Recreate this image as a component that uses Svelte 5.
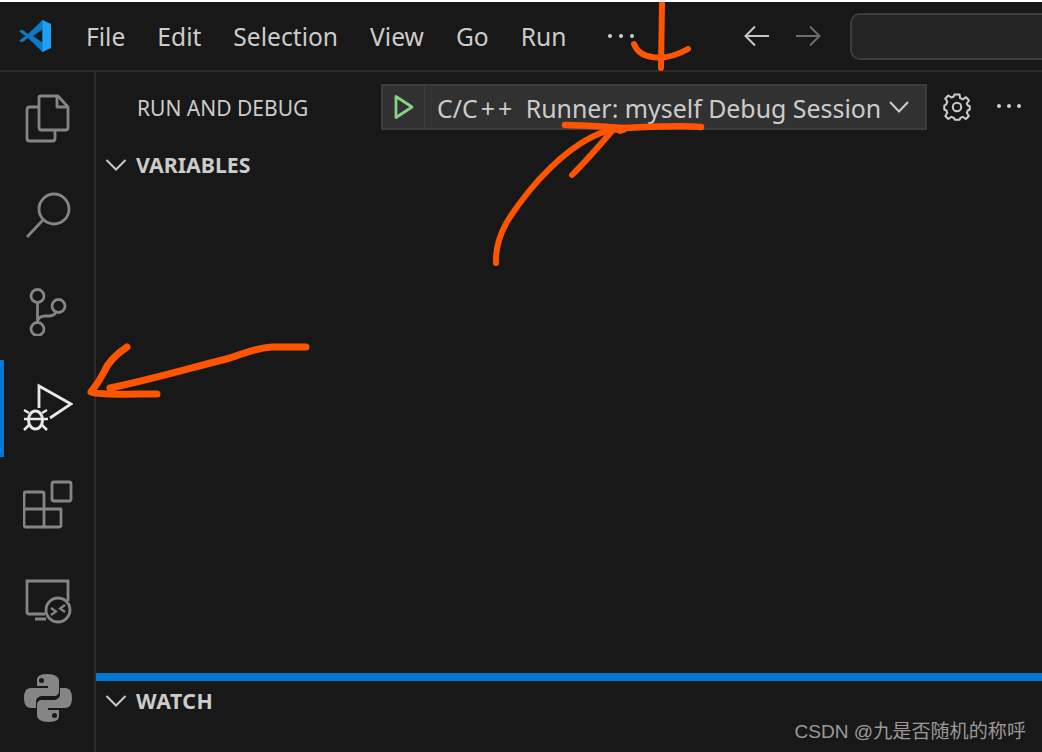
<script>
  const menus = ['File', 'Edit', 'Selection', 'View', 'Go', 'Run'];
</script>

<div class="window">
  <header class="titlebar">
    <svg class="logo" width="36" height="36" viewBox="0 0 36 36">
      <path d="M25.500 2 L11 16 L5 11.500 L2 13.200 L8.500 18 L2 22.800 L5 24.500 L11 20 L25.500 34 L27 33.200 V3 Z M25.500 11.500 L16 18 L25.500 24.500 Z" fill="#0a7cc6" fill-rule="evenodd"/>
      <path d="M25.500 2 L34 6 V30 L25.500 34 Z" fill="#1fa0f2"/>
    </svg>
    <nav class="menu">
      {#each menus as m}<span class="menu-item">{m}</span>{/each}
      <span class="menu-more"><i></i><i></i><i></i></span>
    </nav>
    <div class="nav-arrows">
      <svg width="28" height="28" viewBox="0 0 28 28" fill="none" stroke="#c8c8c8" stroke-width="2"><path d="M26 14H3M12 4.500 2.500 14 12 23.500"/></svg>
      <svg width="28" height="28" viewBox="0 0 28 28" fill="none" stroke="#6e6e6e" stroke-width="2"><path d="M2 14H25M16 4.500 25.500 14 16 23.500"/></svg>
    </div>
    <div class="command"></div>
  </header>

  <div class="body">
    <aside class="activity">
      <div class="act">
        <svg width="46" height="50" viewBox="0 0 46 50" fill="none" stroke="#858585" stroke-width="2.800" stroke-linejoin="round">
          <path d="M14 13H4.500Q2 13 2 15.500V44.500Q2 47 4.500 47H27.500Q30 47 30 44.500V36"/>
          <path d="M14 3.500Q14 2 16 2H33L43 13V33.500Q43 36 40.500 36H16.500Q14 36 14 33.500Z"/>
          <path d="M32 2V13H43"/>
        </svg>
      </div>
      <div class="act">
        <svg width="48" height="48" viewBox="0 0 48 48" fill="none" stroke="#858585" stroke-width="2.800">
          <circle cx="30" cy="18" r="15"/>
          <path d="M19 29 3 46"/>
        </svg>
      </div>
      <div class="act">
        <svg width="38" height="48" viewBox="0 0 38 48" fill="none" stroke="#858585" stroke-width="2.800">
          <circle cx="8.500" cy="8" r="6.500"/>
          <circle cx="29.500" cy="18" r="6.500"/>
          <circle cx="8.500" cy="41" r="6.500"/>
          <path d="M8.500 14.500V34.500M8.500 33Q10 28 16 28H20Q25 28 27 24"/>
        </svg>
      </div>
      <div class="act active">
        <svg width="50" height="50" viewBox="0 0 50 50" fill="none" stroke="#e8e8e8" stroke-width="2.800">
          <path d="M16 25V3L48 21 27 35"/>
          <ellipse cx="12.500" cy="37" rx="7" ry="9" stroke-width="3"/>
          <path d="M6 36H19M1 27 6 30M24 27 19 30M1 36H6M19 36H25M1 47 6 42M24 47 19 42" stroke-width="2.600"/>
        </svg>
      </div>
      <div class="act">
        <svg width="50" height="50" viewBox="0 0 50 50" fill="none" stroke="#858585" stroke-width="2.800" stroke-linejoin="round">
          <rect x="29" y="2" width="19" height="19" rx="2"/>
          <path d="M3 12H19Q21 12 21 14V47H3Q1 47 1 45V14Q1 12 3 12Z"/>
          <path d="M1 29H21M21 29H38V45Q38 47 36 47H21"/>
        </svg>
      </div>
      <div class="act">
        <svg width="48" height="46" viewBox="0 0 48 46" fill="none" stroke="#858585" stroke-width="2.800">
          <path d="M44 23V3H3V34Q3 36 5 36H21M11 41H22"/>
          <circle cx="34" cy="32" r="12" fill="#181818"/>
          <path d="M27 30 32 33.500 27 37M41 27 36 30.500 41 34" stroke-width="2.200"/>
        </svg>
      </div>
      <div class="act">
        <svg width="48" height="48" viewBox="0 0 48 48">
          <path d="M23.500 0C13 0 13 4 13 7V12H24V14H7C2 14 0 18 0 24C0 30 2 34 7 34H12V28C12 24 15 22 19 22H30C33 22 35 20 35 17V7C35 3 31 0 23.500 0ZM17.500 4A2.500 2.500 0 1 1 17.500 9A2.500 2.500 0 0 1 17.500 4Z" fill="#858585" fill-rule="evenodd"/>
          <path d="M24.500 48C35 48 35 44 35 41V36H24V34H41C46 34 48 30 48 24C48 18 46 14 41 14H36V20C36 24 33 26 29 26H18C15 26 13 28 13 31V41C13 45 17 48 24.500 48ZM30.500 44A2.500 2.500 0 1 1 30.500 39A2.500 2.500 0 0 1 30.500 44Z" fill="#858585" fill-rule="evenodd"/>
        </svg>
      </div>
    </aside>

    <main class="side">
      <div class="side-head">
        <span class="side-title">RUN AND DEBUG</span>
        <div class="debug-box">
          <span class="run-btn">
            <svg width="22" height="26" viewBox="0 0 22 26" fill="none" stroke="#89d185" stroke-width="2.800" stroke-linejoin="round"><path d="M3 2.500V23.500L19 13Z"/></svg>
          </span>
          <span class="config">C/C<span class="lang">++</span> Runner: myself Debug Session</span>
          <svg class="caret" width="22" height="14" viewBox="0 0 22 14" fill="none" stroke="#cccccc" stroke-width="2"><path d="M2 2 11 11.500 20 2"/></svg>
        </div>
        <svg class="gear" width="28" height="28" viewBox="0 0 28 28" fill="none" stroke="#cccccc" stroke-width="2" stroke-linejoin="round">
          <path d="M11.500 1.500H16.500L17.200 5.200L19.800 6.300L23 4.200L26 7.500L23.800 10.500L24.800 12.500L26.700 13V16.500L24.800 17.500L23.800 19.800L25.800 23L22.800 26L19.700 23.800L17.400 24.800L16.500 26.800H11.800L10.800 24.800L8.500 23.800L5.300 26L2.300 23L4.300 19.800L3.300 17.500L1.300 16.500V12.500L3.300 11.300L4.300 8.700L2.300 5.500L5.300 2.500L8.500 4.500L10.800 3.500Z"/>
          <circle cx="14" cy="14" r="4.200"/>
        </svg>
        <span class="dots"><i></i><i></i><i></i></span>
      </div>

      <div class="section">
        <svg width="22" height="14" viewBox="0 0 22 14" fill="none" stroke="#c8c8c8" stroke-width="2"><path d="M1.500 2 11 11.500 20.500 2"/></svg>
        <span class="label">VARIABLES</span>
      </div>
      <div class="spacer"></div>
      <div class="sash"></div>
      <div class="section watch">
        <svg width="22" height="14" viewBox="0 0 22 14" fill="none" stroke="#c8c8c8" stroke-width="2"><path d="M1.500 2 11 11.500 20.500 2"/></svg>
        <span class="label">WATCH</span>
      </div>
    </main>
  </div>

  <svg class="ink" width="1042" height="752" viewBox="0 0 1042 752" fill="none" stroke="#ff5500" stroke-linecap="round" stroke-linejoin="round">
    <path stroke-width="6" d="M662 3 661 68M634 44C640 60 665 62 688 49"/>
    <path stroke-width="6.500" d="M565 125C585 125 605 127 624 128C650 127 680 125 701 127"/>
    <path stroke-width="6" d="M496 263C495 235 510 215 530 190C555 160 585 135 612 130C622 129 630 128 620 131M612 131C600 145 585 162 572 175"/>
    <path stroke-width="7" d="M306 347H272C255 348 245 353 230 358C190 368 150 380 110 388M127 347C115 355 108 362 104 372C100 380 95 387 91 392C95 395 130 394 157 394"/>
  </svg>
  <div class="mark">CSDN @九是否随机的称呼</div>
</div>

<style>
  :global(body) { margin: 0; background: #181818; }
  .window {
    position: relative;
    width: 1042px;
    height: 752px;
    overflow: hidden;
    background: #181818;
    color: #cccccc;
    font-family: "Noto Sans", "Open Sans", sans-serif;
    display: flex;
    flex-direction: column;
    border-top: 2px solid #ffffff;
    box-sizing: border-box;
  }
  .titlebar {
    height: 68px;
    flex: none;
    display: flex;
    align-items: center;
    padding-left: 17px;
    border-bottom: 2px solid #2b2b2b;
    box-sizing: content-box;
  }
  .logo { margin-right: 33px; flex: none; }
  .menu { display: flex; align-items: center; gap: 32px; font-size: 24.600px; color: #cccccc; }
  .menu-more { display: flex; gap: 7px; margin-left: 10px; margin-top: 0; }
  .menu-more i, .dots i { display: block; width: 4px; height: 4px; border-radius: 50%; background: #d0d0d0; }
  .nav-arrows { display: flex; gap: 23px; margin-left: 109px; }
  .command {
    margin-left: 28px;
    width: 300px;
    height: 47px;
    background: #242424;
    border: 2px solid #3c3c3c;
    border-radius: 10px;
    box-sizing: border-box;
    flex: none;
  }
  .body { flex: 1; display: flex; min-height: 0; }
  .activity {
    width: 96px;
    flex: none;
    box-sizing: border-box;
    border-right: 2px solid #2b2b2b;
    display: flex;
    flex-direction: column;
    margin-top: -1.500px;
  }
  .act {
    height: 96.500px;
    flex: none;
    display: flex;
    align-items: center;
    justify-content: center;
    box-sizing: border-box;
    padding-left: 2px;
  }
  .act.active { box-shadow: inset 4px 0 0 #0078d4; }
  .side { flex: 1; display: flex; flex-direction: column; min-width: 0; }
  .side-head {
    display: flex;
    align-items: center;
    height: 46px;
    margin-top: 12px;
    flex: none;
    padding-left: 41px;
  }
  .side-title { width: 244px; flex: none; font-size: 21px; white-space: nowrap; margin-top: 2px; }
  .debug-box {
    width: 546px;
    height: 46px;
    flex: none;
    box-sizing: border-box;
    background: #313131;
    border: 2px solid #3c3c3c;
    display: flex;
    align-items: center;
  }
  .run-btn {
    width: 42px;
    height: 100%;
    box-sizing: border-box;
    border-right: 1px solid #3f3f3f;
    display: flex;
    align-items: center;
    justify-content: center;
    flex: none;
  }
  .config { margin-left: 12px; margin-top: 2px; font-size: 24.900px; white-space: nowrap; color: #cccccc; }
  .lang { letter-spacing: 3px; margin-left: 3px; margin-right: 4px; font-kerning: none; }
  .caret { margin-left: 7px; flex: none; }
  .gear { margin-left: 16px; flex: none; }
  .dots { display: flex; gap: 6px; margin-left: 26px; margin-top: -2px; }
  .section {
    display: flex;
    align-items: center;
    height: 40px;
    margin-top: 15px;
    padding-left: 9px;
    gap: 9px;
    flex: none;
    font-size: 21.300px;
    font-weight: 700;
    color: #cccccc;
  }
  .label { margin-top: -2px; }
  .spacer { flex: 1; }
  .sash { height: 8px; background: #0078d4; flex: none; }
  .section.watch { margin-top: 0; height: 40px; margin-bottom: 31px; letter-spacing: 0.5px; }
  .ink { position: absolute; left: 0; top: -2px; pointer-events: none; }
  .mark {
    position: absolute;
    right: 16px;
    bottom: 8px;
    font-family: "Liberation Sans", "Noto Sans CJK SC", sans-serif;
    font-size: 19.100px;
    color: #9a9a9a;
    white-space: nowrap;
  }
</style>
